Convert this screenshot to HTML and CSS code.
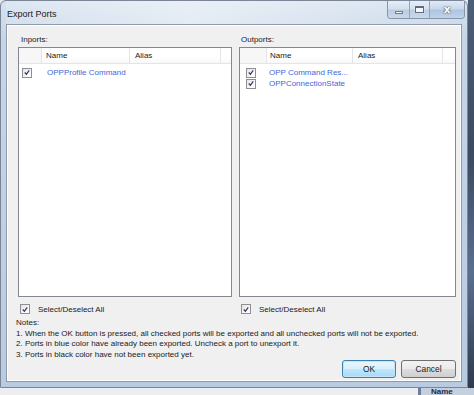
FILE: index.html
```html
<!DOCTYPE html>
<html>
<head>
<meta charset="utf-8">
<link rel="stylesheet" href="styles.css">
</head>
<body>
<div class="desktop">
  <div class="top-row">
    <div class="window">
      <div class="titlebar">
        <span class="title">Export Ports</span>
        <div class="caption-buttons">
          <div class="cbtn cbtn-min"><span class="min-glyph"></span></div>
          <div class="cbtn cbtn-max"><span class="max-glyph"></span></div>
          <div class="cbtn cbtn-close"><span class="close-glyph">x</span></div>
        </div>
      </div>
      <div class="client">
        <div class="panes">
          <div class="pane">
            <div class="pane-label">Inports:</div>
            <div class="listbox">
              <div class="lv-header">
                <div class="hcell hcell-check"></div>
                <div class="hcell hcell-name">Name</div>
                <div class="hcell hcell-alias">Alias</div>
                <div class="hcell hcell-fill"></div>
              </div>
              <div class="lv-row">
                <span class="cb"><svg viewBox="0 0 9 9" width="9" height="9"><path d="M2 4.5 L3.8 6.5 L7 2" fill="none" stroke="#2d3f73" stroke-width="1.4"/></svg></span>
                <span class="port exported">OPPProfile Command</span>
              </div>
            </div>
            <label class="selall"><span class="cb"><svg viewBox="0 0 9 9" width="9" height="9"><path d="M2 4.5 L3.8 6.5 L7 2" fill="none" stroke="#2d3f73" stroke-width="1.4"/></svg></span>Select/Deselect All</label>
          </div>
          <div class="pane pane-right">
            <div class="pane-label">Outports:</div>
            <div class="listbox">
              <div class="lv-header">
                <div class="hcell hcell-check hcell-check-r"></div>
                <div class="hcell hcell-name hcell-name-r">Name</div>
                <div class="hcell hcell-alias hcell-alias-r">Alias</div>
                <div class="hcell hcell-fill"></div>
              </div>
              <div class="lv-row lv-row-r">
                <span class="cb"><svg viewBox="0 0 9 9" width="9" height="9"><path d="M2 4.5 L3.8 6.5 L7 2" fill="none" stroke="#2d3f73" stroke-width="1.4"/></svg></span>
                <span class="port exported">OPP Command Res...</span>
              </div>
              <div class="lv-row lv-row-r">
                <span class="cb"><svg viewBox="0 0 9 9" width="9" height="9"><path d="M2 4.5 L3.8 6.5 L7 2" fill="none" stroke="#2d3f73" stroke-width="1.4"/></svg></span>
                <span class="port exported">OPPConnectionState</span>
              </div>
            </div>
            <label class="selall"><span class="cb"><svg viewBox="0 0 9 9" width="9" height="9"><path d="M2 4.5 L3.8 6.5 L7 2" fill="none" stroke="#2d3f73" stroke-width="1.4"/></svg></span>Select/Deselect All</label>
          </div>
        </div>
        <div class="notes">
          <div>Notes:</div>
          <div>1. When the OK button is pressed, all checked ports will be exported and all unchecked ports will not be exported.</div>
          <div>2. Ports in blue color have already been exported. Uncheck a port to unexport it.</div>
          <div>3. Ports in black color have not been exported yet.</div>
        </div>
        <div class="buttons">
          <button class="btn btn-ok">OK</button>
          <button class="btn">Cancel</button>
        </div>
      </div>
    </div>
    <div class="right-strip"></div>
  </div>
  <div class="bottom-strip">
    <div class="behind-name">Name</div>
  </div>
</div>
</body>
</html>
```

FILE: styles.css
```css
* { box-sizing: border-box; }
html, body { margin: 0; padding: 0; }
body {
  width: 474px;
  height: 395px;
  overflow: hidden;
  font-family: "Liberation Sans", Arial, sans-serif;
  background: #e4e7ec;
}
.desktop {
  width: 474px;
  height: 395px;
  display: flex;
  flex-direction: column;
}
.top-row {
  display: flex;
  height: 388px;
}
.window {
  width: 468px;
  height: 388px;
  border-radius: 6px 6px 0 0;
  border: 1px solid #7a8696;
  background: linear-gradient(180deg, #d8e3f0 0%, #c6d5e7 10%, #c0d0e4 60%, #b9cbe0 100%);
  padding: 0 5px 5px 5px;
  display: flex;
  flex-direction: column;
}
.titlebar {
  height: 23px;
  display: flex;
  align-items: flex-start;
  justify-content: space-between;
  background: linear-gradient(90deg, rgba(255,255,255,0.15) 0%, rgba(255,255,255,0.45) 40%, rgba(255,255,255,0.25) 70%, rgba(255,255,255,0) 100%);
}
.title {
  font-family: "Liberation Sans", Arial, sans-serif;
  font-size: 9px;
  color: #1a1a1a;
  padding: 8px 0 0 1px;
}
.caption-buttons {
  display: flex;
  margin-top: 0;
  margin-right: -3px;
  height: 18px;
  border: 1px solid #8795a8;
  border-top: none;
  border-radius: 0 0 4px 4px;
  overflow: hidden;
}
.cbtn {
  height: 17px;
  display: flex;
  align-items: center;
  justify-content: center;
  background: linear-gradient(180deg, #e6eef8 0%, #d3e0ee 45%, #bccde2 55%, #c9d8ea 100%);
}
.cbtn-min { width: 22px; border-right: 1px solid #95a4b8; }
.cbtn-max { width: 20px; border-right: 1px solid #95a4b8; }
.cbtn-close {
  width: 34px;
  background: linear-gradient(180deg, #e0eaf6 0%, #c8d8ec 45%, #aec4df 55%, #c0d3ea 100%);
}
.min-glyph {
  width: 8px;
  height: 3px;
  margin-top: 6px;
  background: #f4f7fb;
  border: 1px solid #6c7a8e;
}
.max-glyph {
  width: 9px;
  height: 7px;
  border: 1px solid #5c6a80;
  border-top-width: 2px;
  background: #f4f7fb;
  box-shadow: 0 0 1px #fff;
}
.close-glyph {
  font-family: "DejaVu Sans", sans-serif;
  font-weight: bold;
  font-size: 11px;
  line-height: 11px;
  color: #ffffff;
  text-shadow: 0 0 1px #3c4a60, 0 0 2px #3c4a60;
}
.client {
  flex: 1;
  background: #f0f0f0;
  border: 1px solid #8f9aab;
  box-shadow: inset 0 0 0 1px #ffffff;
  padding: 10px 6px 0 11px;
  display: flex;
  flex-direction: column;
  font-size: 8px;
  color: #1a1a1a;
}
.panes {
  display: grid;
  grid-template-columns: 214px 217px;
  column-gap: 7px;
}
.pane-label {
  height: 12px;
  line-height: 10px;
  padding-left: 3px;
}
.pane-right .pane-label { padding-left: 2px; }
.listbox {
  height: 250px;
  background: #ffffff;
  border: 1px solid #828790;
}
.lv-header {
  display: flex;
  height: 16px;
  border-bottom: 1px solid #e5e5e5;
  background: linear-gradient(180deg, #ffffff 0%, #ffffff 60%, #f7f8fa 100%);
}
.hcell {
  height: 15px;
  line-height: 15px;
  border-right: 1px solid #e3e5e8;
}
.hcell-check { width: 23px; background: #f7f7f7; }
.hcell-name { width: 88px; padding-left: 4px; }
.hcell-alias { width: 91px; padding-left: 5px; }
.hcell-fill { flex: 1; border-right: none; }
.hcell-check-r { width: 27px; }
.hcell-name-r { width: 86px; padding-left: 3px; }
.hcell-alias-r { width: 90px; padding-left: 5px; }
.lv-row {
  display: flex;
  align-items: center;
  height: 11px;
  margin-top: 3px;
  padding-left: 3px;
}
.lv-row + .lv-row { margin-top: 0; }
.lv-row-r { padding-left: 6px; }
.lv-row .cb { margin-right: 15px; }
.lv-row-r .cb { margin-right: 13px; }
.cb {
  display: inline-flex;
  width: 10px;
  height: 10px;
  border: 1px solid #8f8f8f;
  background: linear-gradient(135deg, #e4e4e4 0%, #f7f7f7 60%, #ffffff 100%);
  align-items: center;
  justify-content: center;
  flex: none;
}
.cb svg { display: block; }
.port { white-space: nowrap; }
.exported { color: #4466dd; }
.selall {
  display: flex;
  align-items: center;
  height: 12px;
  margin-top: 6px;
  padding-left: 2px;
}
.pane-right .selall { padding-left: 2px; }
.selall .cb { margin-right: 8px; }
.notes {
  margin-top: 3px;
  margin-left: -2px;
  line-height: 10.5px;
  white-space: nowrap;
}
.buttons {
  display: flex;
  justify-content: flex-end;
  gap: 5px;
  margin-top: 0;
  margin-right: -1px;
}
.btn {
  font-family: "Liberation Sans", Arial, sans-serif;
  font-size: 8.4px;
  color: #1a1a1a;
  height: 18px;
  padding: 0;
  border: 1px solid #707070;
  border-radius: 3px;
  background: linear-gradient(180deg, #f2f2f2 0%, #ebebeb 48%, #dddddd 52%, #cfcfcf 100%);
  width: 55px;
}
.btn-ok {
  width: 54px;
  border-color: #3c7fb1;
  box-shadow: inset 0 0 0 1px #c5e4f6;
  background: linear-gradient(180deg, #eaf6fd 0%, #d9f0fc 48%, #bee6fd 52%, #a7d9f5 100%);
}
.right-strip {
  flex: 1;
  background: linear-gradient(180deg, #4d5e78 0%, #3b4a60 40%, #5a6f90 70%, #2f3a4c 100%);
}
.bottom-strip {
  flex: 1;
  display: flex;
  justify-content: flex-end;
  background: #eceef1;
}
.behind-name {
  width: 56px;
  padding-left: 10px;
  border-left: 3px solid #6b7f9c;
  font-size: 8px;
  font-weight: bold;
  line-height: 7px;
  overflow: hidden;
  color: #1f2a3a;
  background: #c4d0e0;
}
```
